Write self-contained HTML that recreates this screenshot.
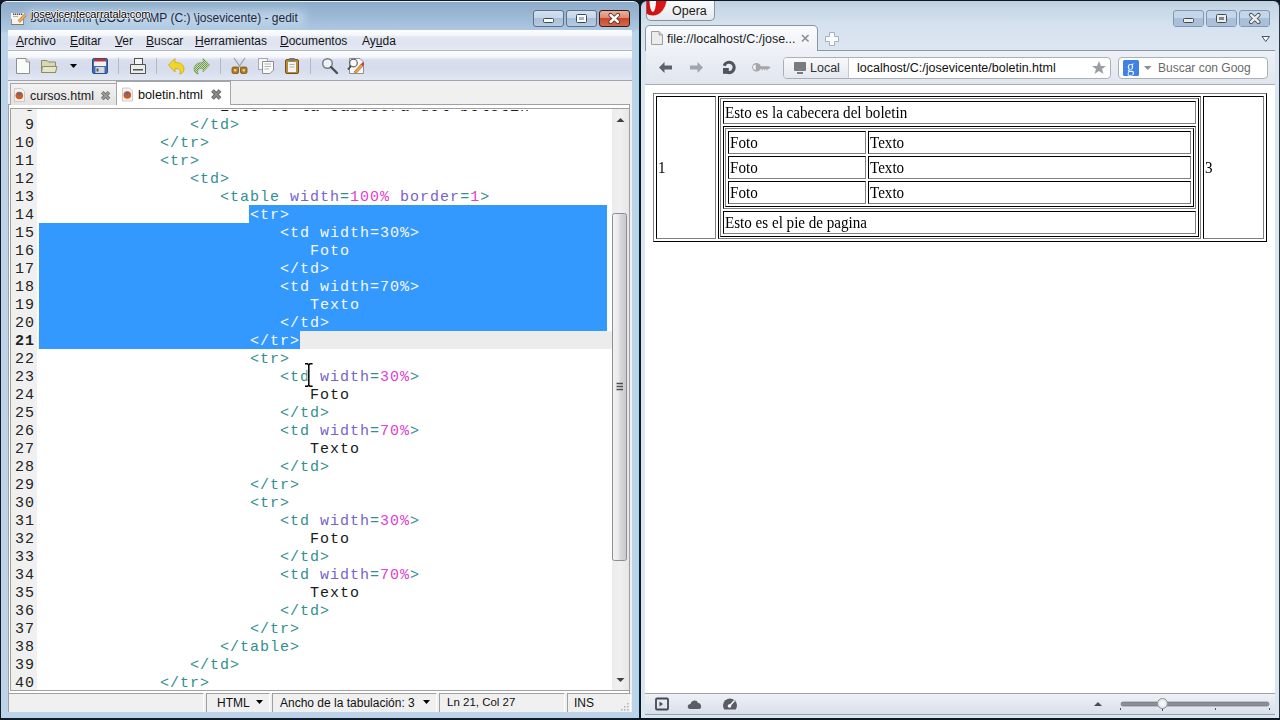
<!DOCTYPE html>
<html><head><meta charset="utf-8">
<style>
*{margin:0;padding:0;box-sizing:border-box}
html,body{width:1280px;height:720px;overflow:hidden;background:#0d1a26;font-family:"Liberation Sans",sans-serif;font-size:12px;color:#000}
.a{position:absolute}
/* gedit */
#gw{left:0;top:0;width:640px;height:720px;background:#0f1b27}
#gframe{left:1px;top:1px;width:638px;height:717px;background:linear-gradient(#8fadca 1px,#9bb8d5 14px,#adc9e4 29px,#bcd3ea 31px,#bcd3ea);border-radius:6px 6px 0 0;border-top:1px solid #e8f0f8}
#title{left:30px;top:11px;font-size:12px;color:#1e2a3a;white-space:nowrap}
#wm{left:31px;top:8px;font-size:11px;letter-spacing:-0.1px;color:#000;white-space:nowrap;text-shadow:0 0 1px #fff,0 0 1px #fff,1px 0 0 rgba(255,255,255,.8),-1px 0 0 rgba(255,255,255,.8),0 1px 0 rgba(255,255,255,.8),0 -1px 0 rgba(255,255,255,.8)}
.wb{height:17px;border:1px solid #5d7189;border-radius:3px;background:linear-gradient(#d3e1f0,#c6d7ea 45%,#a9bfd7 50%,#b7cbe1 100%)}
#menubar{left:8px;top:30px;width:624px;height:21px;background:linear-gradient(#fdfdfe,#f6f8fb 5px,#e2e7f2 7px,#dfe4f0 14px,#e6eaf4);border-bottom:1px solid #b4b9c2}
#menubar span{position:absolute;top:4px;font-size:12px;color:#161616}
#toolbar{left:8px;top:51px;width:624px;height:30px;background:linear-gradient(#fdfdfe,#f4f6fa 6px,#d8deec 9px,#d6dcec 18px,#e2e7f3);border-bottom:1px solid #a0a4ac}
#tabs{left:8px;top:81px;width:624px;height:631px;background:#f0f0f0}
#nb{left:8px;top:104px;width:622px;height:590px;background:#fff;border:1px solid #a0a0a0}
#editor{left:10px;top:108px;width:620px;height:583px;background:#fff;border:1px solid #a0a0a0;overflow:hidden}
#gutter{left:0;top:0;width:26px;height:583px;background:#f0f0f0}
.ln{position:absolute;left:0;width:24px;text-align:right;font-family:"Liberation Mono",monospace;font-size:15px;letter-spacing:1px;line-height:18px;color:#222}
.cl{position:absolute;left:29px;white-space:pre;font-family:"Liberation Mono",monospace;font-size:15px;letter-spacing:1px;line-height:18px;color:#1a1a1a}
.t{color:#338f8f}.at{color:#7565c8}.v{color:#e040d0}
.sel,.sel span{color:#f8f8f8}
#status{left:8px;top:693px;width:624px;height:19px;background:#f0f0f0}
.sb{position:absolute;top:0;height:19px;border-left:1px solid #a0a0a0;border-top:1px solid #a0a0a0;border-right:1px solid #fff;font-size:12px;padding-top:2px;color:#111;white-space:nowrap;background:#f0f0f0}
/* opera */
#oframe{left:641px;top:1px;width:639px;height:717px;border-right:1px solid #2a3440;background:linear-gradient(#bfd0de,#c8d8e6 8px,#d6e2ef 25px,#dce6f1 50px);border-radius:6px 6px 0 0}
#page{left:645px;top:85px;width:630px;height:608px;background:#fff}
.bx{position:absolute;border:1px solid}
.out{border-color:#808080 #000 #000 #808080}
.in{border-color:#000 #808080 #808080 #000}
.pt{position:absolute;font-family:"Liberation Serif",serif;font-size:16px;transform:scaleX(0.943);transform-origin:0 0;line-height:19px;white-space:nowrap;color:#000}
</style></head><body>
<div id="gw" class="a"></div>
<div id="gframe" class="a"></div>
<div class="a" style="left:26px;top:10px;width:280px;height:16px;border-radius:8px;background:rgba(215,230,245,0.55);filter:blur(5px)"></div>
<div id="title" class="a">boletin.html (BOOTCAMP (C:) \josevicente) - gedit</div>
<div id="wm" class="a">josevicentecarratala.com</div>
<div class="a wb" style="left:533px;top:10px;width:31px"></div>
<div class="a wb" style="left:566px;top:10px;width:31px"></div>
<div class="a wb" style="left:599px;top:10px;width:31px;background:linear-gradient(#eab0a0,#df8a72 45%,#c9472a 50%,#d46a4c);border-color:#3a1a14"></div>
<div id="menubar" class="a">
<span style="left:8px"><u>A</u>rchivo</span>
<span style="left:62px"><u>E</u>ditar</span>
<span style="left:107px"><u>V</u>er</span>
<span style="left:138px"><u>B</u>uscar</span>
<span style="left:187px"><u>H</u>erramientas</span>
<span style="left:272px"><u>D</u>ocumentos</span>
<span style="left:354px">Ay<u>u</u>da</span>
</div>
<div id="toolbar" class="a"></div>
<div id="tabs" class="a"></div><div id="nb" class="a"></div>
<div class="a" style="left:118px;top:58px;width:1px;height:16px;background:#b4b9c2"></div>
<div class="a" style="left:156px;top:58px;width:1px;height:16px;background:#b4b9c2"></div>
<div class="a" style="left:220px;top:58px;width:1px;height:16px;background:#b4b9c2"></div>
<div class="a" style="left:310px;top:58px;width:1px;height:16px;background:#b4b9c2"></div>
<svg class="a" style="left:0;top:0" width="640" height="110" viewBox="0 0 640 110">
<!-- title icon -->
<g><rect x="11" y="13" width="13" height="12" fill="#f6f4ec"/>
<path d="M11.5 19 V24.5 M23.5 19 V24.5" stroke="#6a6a60" stroke-width="1" opacity="0.7"/>
<path d="M11 24.5 H24" stroke="#8a7a55" stroke-width="1"/>
<g fill="#222"><rect x="13" y="13.5" width="1.3" height="1.3"/><rect x="15" y="13.5" width="1.3" height="1.3"/><rect x="17" y="13.5" width="1.3" height="1.3"/><rect x="19" y="13.5" width="1.3" height="1.3"/><rect x="21" y="13.5" width="1.3" height="1.3"/></g>
<path d="M13 16.5 H18" stroke="#b0a8a0" stroke-width="0.9"/>
<path d="M18.8 21.6 L25.6 14.6" stroke="#b87838" stroke-width="3"/><path d="M18.8 21.6 L25.6 14.6" stroke="#eab060" stroke-width="1.8"/></g>
<!-- new -->
<path d="M16.5 58.5 H26 L29.5 62 V73.5 H16.5 Z" fill="#fbfbf8" stroke="#8d8f92"/>
<path d="M26 58.5 V62 H29.5" fill="#dcdcdc" stroke="#8d8f92" stroke-width="0.8"/>
<!-- open -->
<path d="M41.5 60.5 H47 L48.5 62 H55.5 V72.5 H41.5 Z" fill="#d7d7b2" stroke="#8a8c6c"/>
<path d="M42.5 66.5 H57 L55.5 72.5 H41.5 Z" fill="#e6e6c6" stroke="#8a8c6c"/>
<path d="M70 64 H77 L73.5 68 Z" fill="#000"/>
<!-- save -->
<rect x="92.5" y="58.5" width="15" height="15" rx="1.5" fill="#3b6cb4" stroke="#2a4f8c"/>
<rect x="94" y="59" width="12" height="2.5" fill="#d42a2a"/>
<rect x="94" y="61.5" width="12" height="4.5" fill="#f2f2f2"/>
<rect x="95.5" y="67" width="9" height="6" fill="#d8d8d8"/>
<rect x="96.5" y="68.5" width="2" height="3" fill="#555"/>
<!-- print -->
<rect x="134.5" y="58.5" width="8" height="6" fill="#f4f4f2" stroke="#505458"/>
<path d="M130.5 64.5 H145.5 V73.5 H130.5 Z" fill="#ecece8" stroke="#505458"/>
<rect x="133" y="69" width="10" height="1.5" fill="#505458"/>
<!-- undo -->
<path d="M168.5 65 L175 58.5 V62.5 C181 62.5 184 65 184 69 C184 72 182 74 179.5 74 C181 72 181 68 175 68.5 V72 Z" fill="#f2d52a" stroke="#c8a818" stroke-width="0.8"/>
<!-- redo -->
<defs><pattern id="dith" width="2" height="2" patternUnits="userSpaceOnUse"><rect width="2" height="2" fill="#c8dcb0"/><rect width="1" height="1" fill="#6a9a4a"/><rect x="1" y="1" width="1" height="1" fill="#6a9a4a"/></pattern></defs><path d="M209.5 65 L203 58.5 V62.5 C197 62.5 194 65 194 69 C194 72 196 74 198.5 74 C197 72 197 68 203 68.5 V72 Z" fill="url(#dith)" stroke="#7a9a60" stroke-width="0.6"/>
<!-- cut -->
<path d="M234 58 L241 68 M245 58 L238 68" stroke="#9a9ea2" stroke-width="1.2"/>
<rect x="232" y="67" width="6.5" height="6.5" rx="1.5" fill="#b07a20" stroke="#7a5210" stroke-width="0.8"/>
<rect x="240.5" y="67" width="6.5" height="6.5" rx="1.5" fill="#b07a20" stroke="#7a5210" stroke-width="0.8"/>
<circle cx="235.2" cy="70.2" r="1.3" fill="#f0d090"/><circle cx="243.8" cy="70.2" r="1.3" fill="#f0d090"/>
<!-- copy -->
<rect x="258.5" y="58.5" width="9" height="11" fill="#f6f6f6" stroke="#a8aaae"/>
<path d="M262.5 61.5 H273.5 V70 L270 73.5 H262.5 Z" fill="#fafafa" stroke="#8d8f92"/>
<path d="M264.5 64 H271 M264.5 66.5 H271 M264.5 69 H269" stroke="#a0a2a6" stroke-width="0.8"/>
<!-- paste -->
<rect x="285.5" y="59.5" width="13" height="14" rx="1.5" fill="#b88a3a" stroke="#6e5020"/>
<rect x="288" y="62" width="8" height="10" fill="#f4f4f2"/>
<rect x="289" y="58" width="6" height="3" rx="1" fill="#777"/>
<path d="M289.5 64.5 H294.5 M289.5 67 H294.5" stroke="#a0a0a0" stroke-width="0.8"/>
<!-- find -->
<circle cx="327.5" cy="63.5" r="4.8" fill="#eef2f6" stroke="#75797e" stroke-width="1.4"/>
<path d="M331 67 L337 73" stroke="#4a4e54" stroke-width="2.4" stroke-linecap="round"/>
<!-- replace -->
<path d="M349.5 58.5 H360 L363.5 62 V73.5 H349.5 Z" fill="#f8f8f8" stroke="#8d8f92"/>
<circle cx="353.5" cy="63" r="3.8" fill="none" stroke="#606468" stroke-width="1.2"/>
<path d="M351 66 L348 69.5" stroke="#404448" stroke-width="1.8"/>
<path d="M354 72 L361 64 L363 66 L356 73.5 Z" fill="#e8a040" stroke="#a0602a" stroke-width="0.6"/>
<path d="M361 64 L363 62 L364 64 L363 66 Z" fill="#d03030"/>
<!-- window glyphs -->
<rect x="543.5" y="18.5" width="10" height="4" rx="1" fill="#fff" stroke="#3a4a5c"/>
<rect x="576.5" y="14.5" width="10" height="8" rx="1" fill="#fff" stroke="#3a4a5c"/>
<rect x="579" y="17" width="5" height="3" fill="#a8b6c4"/>
<path d="M610.5 15 L618 22 M618 15 L610.5 22" stroke="#5a2a22" stroke-width="4.2" stroke-linecap="round"/>
<path d="M610.5 15 L618 22 M618 15 L610.5 22" stroke="#fff" stroke-width="2.4" stroke-linecap="round"/>
</svg>
<!-- tabs -->
<div class="a" style="left:10px;top:83px;width:107px;height:22px;background:linear-gradient(#f2f2f2,#e2e2e2);border:1px solid #a6a6a6;border-bottom:none"></div>
<div class="a" style="left:116px;top:81px;width:115px;height:24px;background:#fff;border:1px solid #a6a6a6;border-bottom:none"></div>
<div class="a" style="left:30px;top:89px;font-size:12.5px;color:#1a1a1a">cursos.html</div>
<div class="a" style="left:138px;top:88px;font-size:12.7px;color:#111">boletin.html</div>
<svg class="a" style="left:0;top:80px" width="240" height="30" viewBox="0 80 240 30">
<g id="fic"><path d="M14.5 88.5 H21.5 L24.5 91.5 V101.5 H14.5 Z" fill="#f8f0ea" stroke="#c8c0b8" stroke-width="0.8"/><circle cx="19.3" cy="95.5" r="3.8" fill="#d05a20"/><path d="M17 93 Q19.5 91.5 22 93.5 Q20 94 19 96 Z" fill="#4a6ea8"/></g>
<use href="#fic" x="108" y="-0.5"/>
<path d="M102.2 92.2 L109 99 M109 92.2 L102.2 99" stroke="#6a6a6a" stroke-width="3.6"/><path d="M102.2 92.2 L109 99 M109 92.2 L102.2 99" stroke="#9a9a9a" stroke-width="2"/>
<path d="M212.5 90.5 L220 98.5 M220 90.5 L212.5 98.5" stroke="#5a5a5a" stroke-width="3.8"/><path d="M212.5 90.5 L220 98.5 M220 90.5 L212.5 98.5" stroke="#8a8a8a" stroke-width="2"/>
</svg>


<div id="editor" class="a">
<div id="gutter" class="a"></div>
<div class="a" style="left:27px;top:222px;width:582px;height:18px;background:#ececec"></div>
<div class="a" style="left:238px;top:96px;width:358px;height:18px;background:#3399ff"></div>
<div class="a" style="left:28px;top:114px;width:568px;height:108px;background:#3399ff"></div>
<div class="a" style="left:28px;top:222px;width:261px;height:18px;background:#3399ff"></div>
<div class="ln" style="top:-10px">8</div>
<div class="cl" style="top:-10px">                  Esto es la cabecera del boletin</div>
<div class="ln" style="top:8px">9</div>
<div class="cl" style="top:8px">               <span class="t">&lt;/td&gt;</span></div>
<div class="ln" style="top:26px">10</div>
<div class="cl" style="top:26px">            <span class="t">&lt;/tr&gt;</span></div>
<div class="ln" style="top:44px">11</div>
<div class="cl" style="top:44px">            <span class="t">&lt;tr&gt;</span></div>
<div class="ln" style="top:62px">12</div>
<div class="cl" style="top:62px">               <span class="t">&lt;td&gt;</span></div>
<div class="ln" style="top:80px">13</div>
<div class="cl" style="top:80px">                  <span class="t">&lt;table </span><span class="at">width</span><span class="t">=</span><span class="v">100%</span><span class="t"> </span><span class="at">border</span><span class="t">=</span><span class="v">1</span><span class="t">&gt;</span></div>
<div class="ln" style="top:98px">14</div>
<div class="cl sel" style="top:98px">                     <span class="t">&lt;tr&gt;</span></div>
<div class="ln" style="top:116px">15</div>
<div class="cl sel" style="top:116px">                        <span class="t">&lt;td </span><span class="at">width</span><span class="t">=</span><span class="v">30%</span><span class="t">&gt;</span></div>
<div class="ln" style="top:134px">16</div>
<div class="cl sel" style="top:134px">                           Foto</div>
<div class="ln" style="top:152px">17</div>
<div class="cl sel" style="top:152px">                        <span class="t">&lt;/td&gt;</span></div>
<div class="ln" style="top:170px">18</div>
<div class="cl sel" style="top:170px">                        <span class="t">&lt;td </span><span class="at">width</span><span class="t">=</span><span class="v">70%</span><span class="t">&gt;</span></div>
<div class="ln" style="top:188px">19</div>
<div class="cl sel" style="top:188px">                           Texto</div>
<div class="ln" style="top:206px">20</div>
<div class="cl sel" style="top:206px">                        <span class="t">&lt;/td&gt;</span></div>
<div class="ln" style="top:224px;font-weight:bold">21</div>
<div class="cl sel" style="top:224px">                     <span class="t">&lt;/tr&gt;</span></div>
<div class="ln" style="top:242px">22</div>
<div class="cl" style="top:242px">                     <span class="t">&lt;tr&gt;</span></div>
<div class="ln" style="top:260px">23</div>
<div class="cl" style="top:260px">                        <span class="t">&lt;td </span><span class="at">width</span><span class="t">=</span><span class="v">30%</span><span class="t">&gt;</span></div>
<div class="ln" style="top:278px">24</div>
<div class="cl" style="top:278px">                           Foto</div>
<div class="ln" style="top:296px">25</div>
<div class="cl" style="top:296px">                        <span class="t">&lt;/td&gt;</span></div>
<div class="ln" style="top:314px">26</div>
<div class="cl" style="top:314px">                        <span class="t">&lt;td </span><span class="at">width</span><span class="t">=</span><span class="v">70%</span><span class="t">&gt;</span></div>
<div class="ln" style="top:332px">27</div>
<div class="cl" style="top:332px">                           Texto</div>
<div class="ln" style="top:350px">28</div>
<div class="cl" style="top:350px">                        <span class="t">&lt;/td&gt;</span></div>
<div class="ln" style="top:368px">29</div>
<div class="cl" style="top:368px">                     <span class="t">&lt;/tr&gt;</span></div>
<div class="ln" style="top:386px">30</div>
<div class="cl" style="top:386px">                     <span class="t">&lt;tr&gt;</span></div>
<div class="ln" style="top:404px">31</div>
<div class="cl" style="top:404px">                        <span class="t">&lt;td </span><span class="at">width</span><span class="t">=</span><span class="v">30%</span><span class="t">&gt;</span></div>
<div class="ln" style="top:422px">32</div>
<div class="cl" style="top:422px">                           Foto</div>
<div class="ln" style="top:440px">33</div>
<div class="cl" style="top:440px">                        <span class="t">&lt;/td&gt;</span></div>
<div class="ln" style="top:458px">34</div>
<div class="cl" style="top:458px">                        <span class="t">&lt;td </span><span class="at">width</span><span class="t">=</span><span class="v">70%</span><span class="t">&gt;</span></div>
<div class="ln" style="top:476px">35</div>
<div class="cl" style="top:476px">                           Texto</div>
<div class="ln" style="top:494px">36</div>
<div class="cl" style="top:494px">                        <span class="t">&lt;/td&gt;</span></div>
<div class="ln" style="top:512px">37</div>
<div class="cl" style="top:512px">                     <span class="t">&lt;/tr&gt;</span></div>
<div class="ln" style="top:530px">38</div>
<div class="cl" style="top:530px">                  <span class="t">&lt;/table&gt;</span></div>
<div class="ln" style="top:548px">39</div>
<div class="cl" style="top:548px">               <span class="t">&lt;/td&gt;</span></div>
<div class="ln" style="top:566px">40</div>
<div class="cl" style="top:566px">            <span class="t">&lt;/tr&gt;</span></div>
<div class="a" style="left:0;top:0;width:26px;height:1px;background:#f0f0f0"></div><div class="a" style="left:26px;top:0;width:575px;height:1px;background:#fff"></div>

<div class="a" style="left:601px;top:0;width:17px;height:581px;background:linear-gradient(90deg,#ececec,#f0f0f0 50%,#e6e6e6)"></div>
<svg class="a" style="left:601px;top:0" width="17" height="581" viewBox="0 0 17 581">
<path d="M4.5 13 L8.5 9 L12.5 13 Z" fill="#404040"/>
<path d="M4.5 569 L12.5 569 L8.5 573 Z" fill="#404040"/>
<rect x="0.5" y="104.5" width="14" height="347" rx="2" fill="url(#thg)" stroke="#8e8e8e"/>
<defs><linearGradient id="thg" x1="0" x2="1"><stop offset="0" stop-color="#f4f4f4"/><stop offset="0.45" stop-color="#e8e8e8"/><stop offset="0.55" stop-color="#d8d8dc"/><stop offset="1" stop-color="#c8c8cc"/></linearGradient></defs>
<path d="M4.5 274.5 H11 M4.5 277.5 H11 M4.5 280.5 H11" stroke="#505050" stroke-width="1.3"/>
</svg>
</div>
<svg class="a" style="left:300px;top:360px" width="20" height="30" viewBox="300 360 20 30">
<path d="M305 363.8 H307.6 L308.8 365 L310 363.8 H312.6 M308.8 365 V385 M305 386.2 H307.6 L308.8 385 L310 386.2 H312.6" fill="none" stroke="#fff" stroke-width="2.6"/>
<path d="M305 363.8 H307.6 L308.8 365 L310 363.8 H312.6 M308.8 365 V385 M305 386.2 H307.6 L308.8 385 L310 386.2 H312.6" fill="none" stroke="#000" stroke-width="1.5"/>
</svg>
<div id="status" class="a">
<div class="sb" style="left:0;width:196px"></div>
<div class="sb" style="left:198px;width:64px;padding-left:10px">HTML</div>
<div class="sb" style="left:264px;width:165px;padding-left:7px">Ancho de la tabulación: 3</div>
<div class="sb" style="left:431px;width:126px;padding-left:7px;font-size:11.5px">Ln 21, Col 27</div>
<div class="sb" style="left:559px;width:64px;padding-left:6px">INS</div>
<svg class="a" style="left:0;top:0" width="624" height="20" viewBox="8 693 624 20">
<path d="M256 700 H263 L259.5 704 Z" fill="#000"/>
<path d="M423 700 H430 L426.5 704 Z" fill="#000"/>
<g fill="#b0b0b0"><rect x="627" y="703" width="1.5" height="1.5"/><rect x="624" y="706" width="1.5" height="1.5"/><rect x="627" y="706" width="1.5" height="1.5"/><rect x="621" y="709" width="1.5" height="1.5"/><rect x="624" y="709" width="1.5" height="1.5"/><rect x="627" y="709" width="1.5" height="1.5"/></g>
</svg>
</div>

<div class="a" style="left:635px;top:30px;width:4px;height:682px;background:linear-gradient(90deg,#bcd3ea,#acd8ec)"></div>
<div id="oframe" class="a"></div>
<div id="page" class="a"></div>
<div class="bx out" style="left:653px;top:93px;width:614px;height:149px"></div>
<div class="bx in" style="left:656px;top:96px;width:60px;height:143px"></div>
<div class="bx in" style="left:718px;top:96px;width:483px;height:143px"></div>
<div class="bx in" style="left:1203px;top:96px;width:61px;height:143px"></div>
<div class="bx out" style="left:720px;top:98px;width:479px;height:139px"></div>
<div class="bx in" style="left:723px;top:101px;width:473px;height:23px"></div>
<div class="bx in" style="left:723px;top:126px;width:473px;height:83px"></div>
<div class="bx in" style="left:723px;top:211px;width:473px;height:23px"></div>
<div class="bx out" style="left:725px;top:128px;width:469px;height:79px"></div>
<div class="bx in" style="left:728px;top:131px;width:138px;height:23px"></div>
<div class="bx in" style="left:868px;top:131px;width:323px;height:23px"></div>
<div class="bx in" style="left:728px;top:156px;width:138px;height:23px"></div>
<div class="bx in" style="left:868px;top:156px;width:323px;height:23px"></div>
<div class="bx in" style="left:728px;top:181px;width:138px;height:23px"></div>
<div class="bx in" style="left:868px;top:181px;width:323px;height:23px"></div>
<div class="pt" style="left:725px;top:103px">Esto es la cabecera del boletin</div>
<div class="pt" style="left:725px;top:213px">Esto es el pie de pagina</div>
<div class="pt" style="left:658px;top:158px">1</div>
<div class="pt" style="left:1205px;top:158px">3</div>
<div class="pt" style="left:730px;top:133px">Foto</div>
<div class="pt" style="left:870px;top:133px">Texto</div>
<div class="pt" style="left:730px;top:158px">Foto</div>
<div class="pt" style="left:870px;top:158px">Texto</div>
<div class="pt" style="left:730px;top:183px">Foto</div>
<div class="pt" style="left:870px;top:183px">Texto</div>
<!-- opera chrome -->
<div class="a" style="left:646px;top:1px;width:69px;height:20px;border:1px solid #8a929c;border-top:none;border-radius:0 0 5px 5px;background:linear-gradient(#fafbfc,#e6e9ee)"></div>
<svg class="a" style="left:640px;top:0" width="640" height="90" viewBox="640 0 640 90">
<defs><clipPath id="obc"><rect x="646.5" y="1" width="68" height="19"/></clipPath><linearGradient id="org" x1="0" x2="1"><stop offset="0" stop-color="#c00a10"/><stop offset="1" stop-color="#e01818"/></linearGradient></defs>
<g clip-path="url(#obc)"><ellipse cx="652.8" cy="-2.5" rx="14" ry="18" fill="url(#org)"/><ellipse cx="652.8" cy="0" rx="3.3" ry="12" fill="#f2f4f6"/></g>

<!-- window buttons -->
<g fill="#c4d6ea" stroke="#8198b2">
<rect x="1173.5" y="10.5" width="30" height="16" rx="2.5"/>
<rect x="1206.5" y="10.5" width="30" height="16" rx="2.5"/>
<rect x="1239.5" y="10.5" width="30" height="16" rx="2.5"/>
</g>
<g fill="#aac0d8"><rect x="1174" y="18" width="29" height="8"/><rect x="1207" y="18" width="29" height="8"/><rect x="1240" y="18" width="29" height="8"/></g>
<rect x="1183.5" y="18.5" width="10" height="4" rx="1" fill="#f0ece4" stroke="#3e4a58"/>
<rect x="1216.5" y="14.5" width="10" height="8" rx="1" fill="#f0ece4" stroke="#3e4a58"/>
<rect x="1219" y="17" width="5" height="3" fill="#7a8896"/>
<path d="M1251 15 L1258.5 22 M1258.5 15 L1251 22" stroke="#3e4a58" stroke-width="4.2" stroke-linecap="round"/>
<path d="M1251 15 L1258.5 22 M1258.5 15 L1251 22" stroke="#eceae6" stroke-width="2.4" stroke-linecap="round"/>
<path d="M1262 36.5 H1269.5 L1265.75 41.5 Z" fill="#fff" stroke="#4a5562" stroke-width="1"/>
<!-- tab -->
<path d="M645.5 51 V30 Q645.5 25.5 650 25.5 H813 Q817.5 25.5 817.5 30 V50" fill="url(#tabg)" stroke="#8c96a2"/>
<defs><linearGradient id="tabg" x1="0" y1="0" x2="0" y2="1"><stop offset="0" stop-color="#fafbfd"/><stop offset="1" stop-color="#eef1f6"/></linearGradient>
<linearGradient id="tbg" x1="0" y1="0" x2="0" y2="1"><stop offset="0" stop-color="#eef1f6"/><stop offset="1" stop-color="#e1e6ee"/></linearGradient></defs>
<path d="M651.5 31.5 H659 L662.5 35 V44.5 H651.5 Z" fill="#ececec" stroke="#9a9ea4"/>
<path d="M659 31.5 V35 H662.5" fill="#c8c8c8" stroke="#9a9ea4" stroke-width="0.8"/>
<path d="M802 35 L808.5 41.5 M808.5 35 L802 41.5" stroke="#8a8e94" stroke-width="1.6"/>
<path d="M829.5 32.5 H834.5 V36.5 H838.5 V41.5 H834.5 V45.5 H829.5 V41.5 H825.5 V36.5 H829.5 Z" fill="#fafbfc" stroke="#a8b0ba"/>
<!-- toolbar -->
<rect x="646" y="50" width="629" height="34" fill="url(#tbg)"/>
<path d="M817 50.5 H1275" stroke="#8c96a2"/>
<path d="M645 84.5 H1275" stroke="#a6adb6"/>
<path d="M659 67.5 L664.5 62 V65.5 H672 V69.5 H664.5 V73 Z" fill="#5d6168"/>
<path d="M703 67.5 L697.5 62 V65.5 H690 V69.5 H697.5 V73 Z" fill="#a2a6ac"/>
<path d="M724.2 65.8 A5.1 5.1 0 1 1 727.5 72.3" fill="none" stroke="#50545b" stroke-width="3.2"/>
<path d="M723 68 H728.8 V73.8 H723 Z" fill="#50545b"/>
<circle cx="756.5" cy="67.3" r="4.3" fill="#a3a7ac"/>
<path d="M755.8 64.6 A2.7 2.7 0 0 0 755.8 70 Z" fill="#eceff4"/>
<path d="M759.5 66.2 H768.5 L770.8 67.6 L768.5 69 H767.6 V70.3 H766.4 V69 H765.2 V70.3 H764 V69 H762.8 V70.3 H761.6 V69 H759.5 Z" fill="#a3a7ac"/>
<!-- address -->
<rect x="783.5" y="57.5" width="327" height="21" rx="3.5" fill="#fff" stroke="#a9b0b8"/>
<path d="M787 58 H848.5 V78 H787 Q784 78 784 75 V61 Q784 58 787 58 Z" fill="url(#lg)"/>
<defs><linearGradient id="lg" x1="0" y1="0" x2="0" y2="1"><stop offset="0" stop-color="#f8f9fb"/><stop offset="1" stop-color="#e4e8ee"/></linearGradient></defs>
<path d="M848.5 58 V78" stroke="#c4cad2"/>
<rect x="794" y="62" width="12" height="9" rx="1" fill="#777b80"/>
<rect x="797" y="72" width="6" height="2" fill="#777b80"/>
<path d="M1099 61 L1101 66 H1106 L1102 69 L1103.5 74 L1099 71 L1094.5 74 L1096 69 L1092 66 H1097 Z" fill="#9a9ea3"/>
<!-- search -->
<rect x="1118.5" y="57.5" width="149" height="21" rx="3.5" fill="#fff" stroke="#a9b0b8"/>
<rect x="1123" y="60" width="16" height="16" rx="1.5" fill="#3f82e4"/>
<path d="M1144 66 H1151.5 L1147.75 70 Z" fill="#8a8e94"/>
<!-- status bar -->
</svg>
<div class="a" style="left:667px;top:32px;font-size:12.5px;color:#1c1c1c;white-space:nowrap">file://localhost/C:/jose...</div>
<div class="a" style="left:672px;top:4px;font-size:12.5px;color:#1a1a1a">Opera</div>
<div class="a" style="left:810px;top:61px;font-size:12.5px;color:#303030">Local</div>
<div class="a" style="left:857px;top:61px;font-size:12.5px;color:#111;white-space:nowrap">localhost/C:/josevicente/boletin.html</div>
<div class="a" style="left:1158px;top:61px;font-size:12px;color:#6a6a6a;white-space:nowrap">Buscar con Goog</div>
<div class="a" style="left:1126.5px;top:58px;font-family:'Liberation Serif',serif;font-size:17px;color:#f0f6ff;line-height:17px;transform:scaleX(0.85);transform-origin:0 0">g</div>
<!-- opera status -->
<div class="a" style="left:645px;top:693px;width:630px;height:22px;background:linear-gradient(#eef1f6,#d9dfe9);border-top:1px solid #9aa2ac;border-bottom:1px solid #9aa2ac"></div>
<svg class="a" style="left:640px;top:690px" width="640" height="30" viewBox="640 690 640 30">
<rect x="656" y="698.5" width="12" height="11" rx="1" fill="none" stroke="#45494f" stroke-width="1.8"/>
<path d="M659.5 701.5 L663 704 L659.5 706.5 Z" fill="#45494f"/>
<path d="M690 709 C687 709 687 704 690.5 704 C691 700 697 699 698 703 C701.5 702.5 702.5 709 699 709 Z" fill="#5a5e64"/>
<path d="M724.3 709.5 A7 7 0 1 1 735.7 709.5 Z" fill="#5a5e64"/>
<path d="M729.5 706 L734.5 700.5" stroke="#fff" stroke-width="1.4"/>
<circle cx="729.5" cy="706" r="1.8" fill="#fff"/>
<path d="M1094 706 H1102 L1098 702 Z" fill="#4a4e54"/>
<rect x="1121" y="702" width="148" height="4" rx="2" fill="#8a9096" stroke="#656b72" stroke-width="0.6"/>
<path d="M1120.5 708 V710 M1162.5 708 V711 M1215.5 708 V710 M1269.5 708 V710" stroke="#555" stroke-width="1"/>
<circle cx="1162.5" cy="703.5" r="5" fill="url(#kn)" stroke="#8a9096"/>
<defs><radialGradient id="kn"><stop offset="0" stop-color="#ffffff"/><stop offset="1" stop-color="#dde2e8"/></radialGradient></defs>
</svg>

</body></html>
